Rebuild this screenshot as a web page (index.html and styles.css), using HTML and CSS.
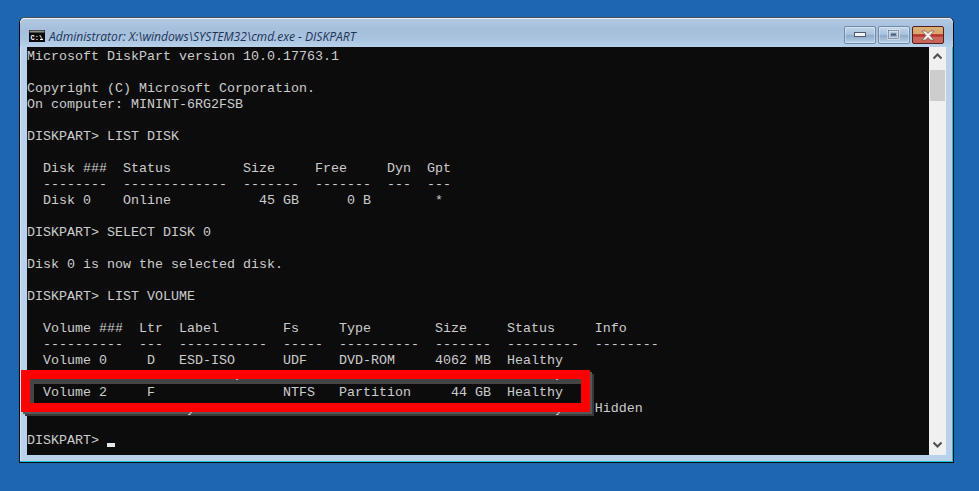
FILE: index.html
```html
<!DOCTYPE html>
<html lang="en">
<head>
<meta charset="utf-8">
<title>DISKPART</title>
<link rel="stylesheet" href="styles.css">
</head>
<body>
<div class="window">
  <header class="titlebar">
    <svg class="cmd-icon" width="16" height="12" viewBox="0 0 16 12">
      <rect width="16" height="12" fill="#0a0a0a"/>
      <rect x="0.5" y="0.5" width="15" height="2" fill="#8d8d8d"/>
      <text x="1.5" y="9.600" class="cmd-icon-text">C:\</text>
      <rect x="11" y="9" width="3" height="1" fill="#fff"/>
    </svg>
    <span class="title">Administrator: X:\windows\SYSTEM32\cmd.exe - DISKPART</span>
    <div class="controls">
      <div class="btn">
        <svg width="14" height="6" viewBox="0 0 14 6"><rect x="1.5" y="0.5" width="11" height="4" fill="#f1f4f8" stroke="#4e5a68"/></svg>
      </div>
      <div class="btn">
        <svg width="14" height="12" viewBox="0 0 14 12"><rect x="1.5" y="1.5" width="10" height="8" fill="none" stroke="#eef2f7" stroke-width="2"/><rect x="1.5" y="1.5" width="10" height="8" fill="none" stroke="#4e5a68" stroke-width="0.6"/><rect x="4" y="4.500" width="5" height="2" fill="#4e5a68"/></svg>
      </div>
      <div class="btn btn-close">
        <svg width="14" height="11" viewBox="0 0 14 11"><path d="M1 1h3.500L7 3.500 9.500 1H13L9 5.500l4 4.500H9.500L7 7.500 4.500 10H1l4-4.500z" fill="#f2f2f2" stroke="#5b4a44" stroke-width="0.6"/></svg>
      </div>
    </div>
  </header>
  <div class="client">
    <div class="terminal">
      <div class="mark-back"></div>
      <div class="mark-inner"></div>
<pre class="console">Microsoft DiskPart version 10.0.17763.1

Copyright (C) Microsoft Corporation.
On computer: MININT-6RG2FSB

DISKPART&gt; LIST DISK

  Disk ###  Status         Size     Free     Dyn  Gpt
  --------  -------------  -------  -------  ---  ---
  Disk 0    Online           45 GB      0 B        *

DISKPART&gt; SELECT DISK 0

Disk 0 is now the selected disk.

DISKPART&gt; LIST VOLUME

  Volume ###  Ltr  Label        Fs     Type        Size     Status     Info
  ----------  ---  -----------  -----  ----------  -------  ---------  --------
  Volume 0     D   ESD-ISO      UDF    DVD-ROM     4062 MB  Healthy
<span class="row-under">  Volume 1         Recovery     NTFS   Partition    450 MB  Healthy</span>
  Volume 2     F                NTFS   Partition     44 GB  Healthy
  Volume 3         System       FAT32  Partition    100 MB  Healthy    Hidden

DISKPART&gt; <span class="cursor"></span></pre>
      <div class="mark-frame"></div>
    </div>
    <div class="scrollbar">
      <svg class="arrow" width="9" height="7" viewBox="0 0 9 7"><path d="M0.500 5.500 4.500 1.500 8.500 5.500" fill="none" stroke="#505050" stroke-width="2"/></svg>
      <div class="thumb"></div>
      <svg class="arrow arrow-down" width="9" height="7" viewBox="0 0 9 7"><path d="M0.500 1.500 4.500 5.500 8.500 1.500" fill="none" stroke="#505050" stroke-width="2"/></svg>
    </div>
  </div>
</div>
</body>
</html>
```
FILE: styles.css
```css
html, body {
  margin: 0;
  height: 100%;
}
body {
  background: #1f66b1;
  padding: 17px 0 0 19px;
  box-sizing: border-box;
  overflow: hidden;
}
.window {
  width: 935px;
  height: 446px;
  box-sizing: border-box;
  border: 1px solid #0b0b0b;
  border-top-color: #4a4f55;
  border-radius: 6px 6px 0 0;
  background: #b9d1ea;
  box-shadow: inset 0 1px 0 #e8f0f8, inset -1px -1px 0 #19c3dc, inset 1px 0 0 #dbe7f3;
  display: flex;
  flex-direction: column;
  padding: 0 7px 7px;
}
.titlebar {
  height: 29px;
  flex: none;
  margin: 0 -7px;
  padding: 0 9px;
  display: flex;
  align-items: center;
  border-radius: 5px 5px 0 0;
  background: linear-gradient(#b4cae2 0, #a5bedb 40%, #a9c3df 70%, #b9d1ea 100%);
  box-shadow: inset 0 1px 0 #e8f0f8;
}
.cmd-icon {
  flex: none;
  margin-top: 6px;
}
.cmd-icon-text {
  font: bold 7px "Liberation Mono", monospace;
  fill: #fff;
}
.title {
  margin: 7px 0 0 4px;
  font: italic 12.08px "Open Sans", sans-serif;
  color: #1c3357;
  white-space: nowrap;
}
.controls {
  margin: 5px 0 0 auto;
  display: flex;
  gap: 2px;
}
.btn {
  width: 32px;
  height: 18px;
  box-sizing: border-box;
  border: 1px solid #6f8aa8;
  border-radius: 2px;
  background: linear-gradient(#c1d5ea 0, #a9c2de 45%, #8fabc9 55%, #bcd2e8 100%);
  box-shadow: inset 0 0 0 1px rgba(255,255,255,.35);
  display: flex;
  align-items: center;
  justify-content: center;
}
.btn-close {
  border-color: #4d2222;
  background: linear-gradient(#dcb07a 0, #d8a56c 42%, #b8322e 48%, #b8322e 58%, #c96a5b 62%, #c96258 100%);
  box-shadow: none;
}
.client {
  flex: 1;
  min-height: 0;
  display: flex;
}
.terminal {
  flex: 1;
  position: relative;
  background: #0c0c0c;
}
.console {
  position: relative;
  z-index: 1;
  margin: 0;
  padding-top: 2px;
  font: 13.33px/16px "Liberation Mono", monospace;
  color: #cccccc;
}
.row-under {
  position: relative;
  top: -2px;
  font-size: 11.5px;
  letter-spacing: 1.1px;
}
.cursor {
  display: inline-block;
  width: 8px;
  height: 4px;
  margin-bottom: -3px;
  background: #e6e6e6;
}
.mark-back {
  position: absolute;
  left: -6px;
  top: 323px;
  width: 569px;
  height: 42px;
  box-shadow: 2px 2px 0 #585858, 4px 4px 0 #383838;
  background: #0c0c0c;
}
.mark-inner {
  position: absolute;
  left: 3px;
  top: 332px;
  width: 551px;
  height: 24px;
  background: #0c0c0c;
  box-shadow: inset 4px 5px 0 #444444;
}
.mark-frame {
  position: absolute;
  z-index: 2;
  left: -6px;
  top: 323px;
  width: 569px;
  height: 42px;
  box-sizing: border-box;
  border: 9px solid #ff0000;
}
.scrollbar {
  width: 17px;
  flex: none;
  background: #f0f0f0;
  display: flex;
  flex-direction: column;
  align-items: center;
  padding: 6px 0 7px;
  box-sizing: border-box;
}
.arrow {
  flex: none;
}
.arrow-down {
  margin-top: auto;
}
.thumb {
  width: 15px;
  height: 31px;
  margin-top: 10px;
  background: #cdcdcd;
}
```
